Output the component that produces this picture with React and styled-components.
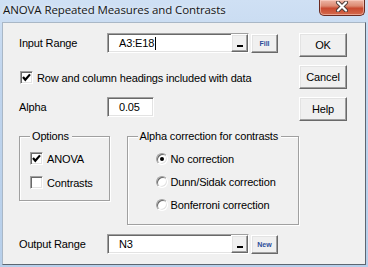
import styled, { createGlobalStyle } from "styled-components";

const GlobalStyle = createGlobalStyle`
  html, body {
    margin: 0;
    padding: 0;
    background: #b9d1ea;
  }
  body {
    font-family: "Liberation Sans", Arial, sans-serif;
    font-size: 11px;
    letter-spacing: -0.15px;
    color: #000;
  }
`;

const Window = styled.div`
  width: 368px;
  height: 267px;
  box-sizing: border-box;
  display: flex;
  flex-direction: column;
  padding: 0 2px 2px 2px;
  background: linear-gradient(180deg, #cfe0f4 0%, #bfd4ed 30%, #b7cfea 100%);
  overflow: hidden;
`;

const TitleBar = styled.div`
  height: 22px;
  flex: none;
  display: flex;
  align-items: flex-start;
  justify-content: space-between;
  padding-left: 1px;
`;

const Title = styled.div`
  font-family: "Open Sans", "Noto Sans", sans-serif;
  font-size: 11.5px;
  letter-spacing: -0.1px;
  line-height: 16px;
  margin-top: 2px;
  color: #151515;
  text-shadow: 0 0 5px rgba(255, 255, 255, 0.9);
  white-space: nowrap;
`;

const CloseButton = styled.div`
  width: 46px;
  height: 16px;
  margin-right: 1px;
  box-sizing: border-box;
  border: 1px solid #6b2a1f;
  border-top: none;
  border-radius: 0 0 5px 5px;
  background: linear-gradient(180deg, #eeb6a6 0%, #dc8a72 40%, #c94a30 55%, #d46a4c 100%);
  box-shadow: inset 0 0 0 1px rgba(255, 220, 210, 0.5);
  display: flex;
  justify-content: center;
  padding-top: 1px;
`;

const Client = styled.div`
  flex: 1;
  display: flex;
  background: #f0f0f0;
  border: 1px solid;
  border-color: #a9b7c6 #5d6670 #5d6670 #a9b7c6;
`;

const LeftPane = styled.div`
  width: 296px;
  box-sizing: border-box;
  padding: 10px 0 0 16px;
  display: flex;
  flex-direction: column;
`;

const ButtonColumn = styled.div`
  padding-top: 10px;
  display: flex;
  flex-direction: column;
  gap: 8px;
`;

const raised = `
  box-sizing: border-box;
  background: #f0f0f0;
  border: 1px solid;
  border-color: #ffffff #696969 #696969 #ffffff;
  box-shadow: inset -1px -1px 0 #a0a0a0, inset 1px 1px 0 #e3e3e3;
`;

const sunken = `
  box-sizing: border-box;
  background: #ffffff;
  border: 1px solid;
  border-color: #a0a0a0 #ffffff #ffffff #a0a0a0;
  box-shadow: inset 1px 1px 0 #696969, inset -1px -1px 0 #e3e3e3;
`;

const DialogButton = styled.div`
  ${raised}
  width: 48px;
  height: 24px;
  display: flex;
  align-items: center;
  justify-content: center;
`;

const FieldRow = styled.div`
  display: flex;
  align-items: center;
  height: 20px;
  margin-top: ${(p) => p.$top || 0}px;
`;

const Label = styled.div`
  width: 88px;
  flex: none;
`;

const RefEdit = styled.div`
  ${sunken}
  width: 142px;
  height: 20px;
  display: flex;
  align-items: center;
  padding-left: 11px;
`;

const Caret = styled.span`
  display: inline-block;
  width: 1px;
  height: 13px;
  background: #000;
  margin-left: 1px;
`;

const DropButton = styled.div`
  ${raised}
  width: 17px;
  height: 18px;
  margin-left: auto;
  display: flex;
  align-items: flex-end;
  justify-content: center;
  padding-bottom: 4px;
`;

const Bar = styled.span`
  width: 6px;
  height: 2px;
  background: #000;
`;

const SmallButton = styled.div`
  ${raised}
  width: 27px;
  height: 19px;
  margin-left: 2px;
  align-self: flex-end;
  display: flex;
  align-items: center;
  justify-content: center;
  font-size: 7px;
  letter-spacing: 0;
  font-weight: bold;
  color: #2b4c9a;
`;

const ValueBox = styled.div`
  ${sunken}
  width: 47px;
  height: 20px;
  display: flex;
  align-items: center;
  padding-left: 11px;
`;

const CheckRow = styled.div`
  display: flex;
  align-items: center;
  gap: 4px;
  height: 13px;
  margin-top: ${(p) => p.$top || 0}px;
  padding-left: ${(p) => p.$indent || 0}px;
`;

const Box = styled.div`
  ${sunken}
  width: 13px;
  height: 13px;
  flex: none;
  display: flex;
  align-items: center;
  justify-content: center;
`;

const Radio = styled.div`
  width: 12px;
  height: 12px;
  flex: none;
  box-sizing: border-box;
  border-radius: 50%;
  border: 1px solid;
  border-color: #a0a0a0 #ffffff #ffffff #a0a0a0;
  background: #ffffff;
  box-shadow: inset 1px 1px 0 #696969, inset -1px -1px 0 #e3e3e3;
  display: flex;
  align-items: center;
  justify-content: center;
  margin-right: -1px;
`;

const Dot = styled.span`
  width: 4px;
  height: 4px;
  border-radius: 50%;
  background: #000;
`;

const GroupsRow = styled.div`
  display: flex;
  align-items: flex-start;
  gap: 17px;
  margin-top: 19px;
`;

const GroupBox = styled.div`
  width: ${(p) => p.$w}px;
  height: ${(p) => p.$h}px;
  box-sizing: border-box;
  border: 1px solid #a0a0a0;
  box-shadow: inset 1px 1px 0 #ffffff, 1px 1px 0 #ffffff;
  display: flex;
  flex-direction: column;
`;

const Legend = styled.div`
  align-self: flex-start;
  margin: -7px 0 0 10px;
  padding: 0 3px 0 2px;
  line-height: 13px;
  background: #f0f0f0;
`;

const GroupBody = styled.div`
  display: flex;
  flex-direction: column;
  gap: ${(p) => p.$gap}px;
  padding: ${(p) => p.$top}px 0 0 ${(p) => p.$left}px;
`;

function Check() {
  return (
    <svg width="9" height="9" viewBox="0 0 9 9">
      <polyline points="1,4 3.3,6.8 8,1.4" fill="none" stroke="#000" strokeWidth="2.2" />
    </svg>
  );
}

function CloseX() {
  return (
    <svg width="14" height="11" viewBox="0 0 14 11">
      <path d="M3 1.5 L11 9.5 M11 1.5 L3 9.5" stroke="#4a3a36" strokeWidth="4" strokeLinecap="round" />
      <path d="M3 1.5 L11 9.5 M11 1.5 L3 9.5" stroke="#ffffff" strokeWidth="2.2" strokeLinecap="round" />
    </svg>
  );
}

export default function App() {
  return (
    <>
      <GlobalStyle />
      <Window>
        <TitleBar>
          <Title>ANOVA Repeated Measures and Contrasts</Title>
          <CloseButton>
            <CloseX />
          </CloseButton>
        </TitleBar>
        <Client>
          <LeftPane>
            <FieldRow>
              <Label>Input Range</Label>
              <RefEdit>
                A3:E18
                <Caret />
                <DropButton>
                  <Bar />
                </DropButton>
              </RefEdit>
              <SmallButton>Fill</SmallButton>
            </FieldRow>

            <CheckRow $top={18} $indent={1}>
              <Box>
                <Check />
              </Box>
              Row and column headings included with data
            </CheckRow>

            <FieldRow $top={13}>
              <Label>Alpha</Label>
              <ValueBox>0.05</ValueBox>
            </FieldRow>

            <GroupsRow>
              <GroupBox $w={96} $h={65}>
                <Legend>Options</Legend>
                <GroupBody $top={9} $left={10} $gap={11}>
                  <CheckRow>
                    <Box>
                      <Check />
                    </Box>
                    ANOVA
                  </CheckRow>
                  <CheckRow>
                    <Box />
                    Contrasts
                  </CheckRow>
                </GroupBody>
              </GroupBox>
              <GroupBox $w={183} $h={89}>
                <Legend>Alpha correction for contrasts</Legend>
                <GroupBody $top={9} $left={28} $gap={10}>
                  <CheckRow>
                    <Radio>
                      <Dot />
                    </Radio>
                    No correction
                  </CheckRow>
                  <CheckRow>
                    <Radio />
                    Dunn/Sidak correction
                  </CheckRow>
                  <CheckRow>
                    <Radio />
                    Bonferroni correction
                  </CheckRow>
                </GroupBody>
              </GroupBox>
            </GroupsRow>

            <FieldRow $top={9}>
              <Label>Output Range</Label>
              <RefEdit>
                N3
                <DropButton>
                  <Bar />
                </DropButton>
              </RefEdit>
              <SmallButton>New</SmallButton>
            </FieldRow>
          </LeftPane>
          <ButtonColumn>
            <DialogButton>OK</DialogButton>
            <DialogButton>Cancel</DialogButton>
            <DialogButton>Help</DialogButton>
          </ButtonColumn>
        </Client>
      </Window>
    </>
  );
}
